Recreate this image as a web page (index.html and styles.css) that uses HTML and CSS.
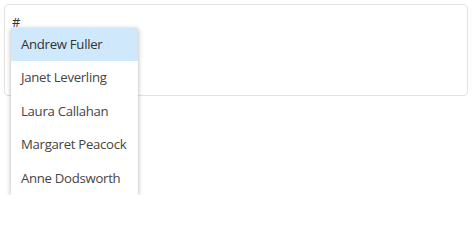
FILE: index.html
```html
<!DOCTYPE html>
<html>
<head>
<meta charset="utf-8">
<link rel="stylesheet" href="styles.css">
</head>
<body>
<div class="stack">
  <div class="editor">
    <div class="content">#</div>
  </div>
  <ul class="popup">
    <li class="item active">Andrew Fuller</li>
    <li class="item">Janet Leverling</li>
    <li class="item">Laura Callahan</li>
    <li class="item">Margaret Peacock</li>
    <li class="item">Anne Dodsworth</li>
  </ul>
</div>
</body>
</html>
```
FILE: styles.css
```css
html, body {
  margin: 0;
  padding: 0;
  background: #fff;
}
body {
  padding: 4px 6px 0 4px;
  font-family: "Open Sans", "Noto Sans", sans-serif;
  color: #333;
}
.stack {
  display: grid;
  grid-template-columns: 1fr;
}
.editor {
  grid-area: 1 / 1;
  align-self: start;
  height: 90px;
  border: 1px solid #e2e2e2;
  border-radius: 4px;
}
.content {
  padding: 9px 0 0 7px;
  font-size: 13px;
  line-height: 16px;
  color: #333;
}
.popup {
  grid-area: 1 / 1;
  align-self: start;
  justify-self: start;
  z-index: 1;
  margin: 24px 0 0 7px;
  width: 127px;
  padding: 0;
  list-style: none;
  background: #fff;
  box-shadow: 0 1px 5px rgba(0,0,0,0.3);
}
.item {
  height: 33.4px;
  line-height: 33px;
  padding: 0 10px;
  font-size: 13.2px;
  letter-spacing: -0.3px;
  color: #444;
  white-space: nowrap;
}
.item.active {
  background: #cfe8fc;
  color: #333;
}
```
